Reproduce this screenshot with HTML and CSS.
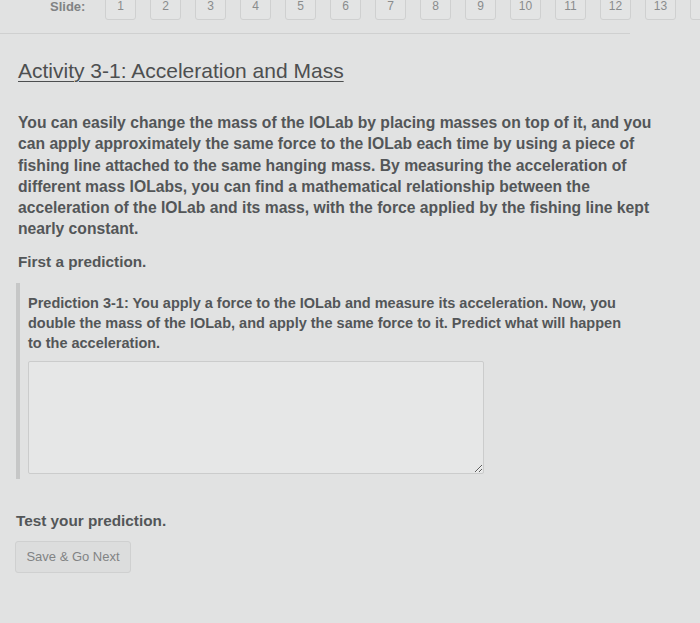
FILE: index.html
```html
<!DOCTYPE html>
<html>
<head>
<meta charset="utf-8">
<link rel="stylesheet" href="styles.css">
</head>
<body>
<div class="slidebar">
  <span class="slide-label">Slide:</span>
  <div class="slide-list">
    <span class="slide-btn">1</span>
    <span class="slide-btn">2</span>
    <span class="slide-btn">3</span>
    <span class="slide-btn">4</span>
    <span class="slide-btn">5</span>
    <span class="slide-btn">6</span>
    <span class="slide-btn">7</span>
    <span class="slide-btn">8</span>
    <span class="slide-btn">9</span>
    <span class="slide-btn">10</span>
    <span class="slide-btn">11</span>
    <span class="slide-btn">12</span>
    <span class="slide-btn">13</span>
    <span class="slide-btn"></span>
  </div>
</div>
<div class="rule"></div>
<main class="content">
  <h1 class="title">Activity 3-1: Acceleration and Mass</h1>
  <p class="intro">You can easily change the mass of the IOLab by placing masses on top of it, and you can apply approximately the same force to the IOLab each time by using a piece of fishing line attached to the same hanging mass. By measuring the acceleration of different mass IOLabs, you can find a mathematical relationship between the acceleration of the IOLab and its mass, with the force applied by the fishing line kept nearly constant.</p>
  <p class="lead">First a prediction.</p>
  <blockquote class="prediction">
    <p class="prediction-text">Prediction 3-1: You apply a force to the IOLab and measure its acceleration. Now, you double the mass of the IOLab, and apply the same force to it. Predict what will happen to the acceleration.</p>
    <textarea class="answer"></textarea>
  </blockquote>
  <p class="test">Test your prediction.</p>
  <button class="next-btn">Save &amp; Go Next</button>
</main>
</body>
</html>
```
FILE: styles.css
```css
html, body {
  margin: 0;
  padding: 0;
}
body {
  background: #e1e2e2;
  color: #535658;
  font-family: "Liberation Sans", Arial, Helvetica, sans-serif;
  height: 623px;
  overflow: hidden;
}
.slidebar {
  display: flex;
  align-items: center;
  padding-left: 50px;
  margin-top: -8px;
  height: 28px;
}
.slide-label {
  flex-shrink: 0;
  font-weight: bold;
  font-size: 13px;
  color: #808284;
  width: 55px;
}
.slide-list {
  display: flex;
  flex-shrink: 0;
  gap: 14px;
}
.slide-btn {
  flex-shrink: 0;
  width: 31px;
  height: 28px;
  box-sizing: border-box;
  border: 1px solid #cfd0d0;
  border-radius: 3px;
  display: flex;
  align-items: center;
  justify-content: center;
  font-size: 12px;
  color: #8a8c8d;
  background: #e3e4e4;
}
.rule {
  width: 630px;
  height: 1px;
  background: #cfd0d0;
  margin-top: 13px;
}
.content {
  padding-left: 18px;
}
.title {
  font-size: 21px;
  font-weight: normal;
  text-decoration: underline;
  text-decoration-thickness: 1px;
  text-underline-offset: 3px;
  color: #4d4f50;
  margin: 25px 0 0;
  line-height: 24px;
}
.intro {
  font-weight: bold;
  font-size: 15.7px;
  line-height: 21.3px;
  margin: 29px 0 0;
  width: 640px;
}
.lead {
  font-weight: bold;
  font-size: 15.3px;
  line-height: 21px;
  margin: 11px 0 0;
}
.prediction {
  margin: 11px 0 0 -2px;
  border-left: 4px solid #c6c7c7;
  padding: 10px 0 5px 8px;
  width: 640px;
}
.prediction-text {
  font-weight: bold;
  font-size: 14.5px;
  line-height: 20px;
  margin: 0;
  width: 602px;
}
.answer {
  display: block;
  width: 456px;
  height: 113px;
  box-sizing: border-box;
  margin-top: 8px;
  border: 1px solid #cbcccc;
  border-radius: 2px;
  background: #e6e7e7;
  resize: both;
}
.test {
  font-weight: bold;
  font-size: 15.3px;
  margin: 33px 0 0 -2px;
}
.next-btn {
  display: block;
  margin: 11px 0 0 -3px;
  width: 116px;
  height: 32px;
  border: 1px solid #cfd0d0;
  border-radius: 3px;
  background: #dcdddd;
  color: #818384;
  font-family: "Liberation Sans", Arial, Helvetica, sans-serif;
  font-size: 13px;
}
```
